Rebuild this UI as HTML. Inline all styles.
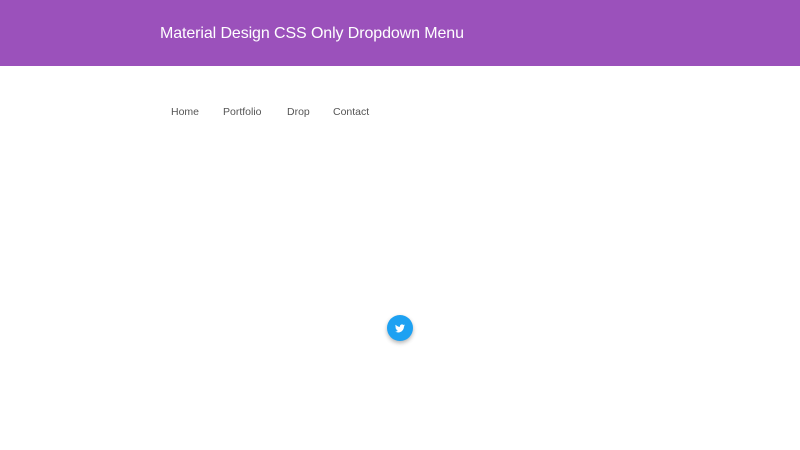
<!DOCTYPE html><html><head><style>
body{margin:0;width:800px;height:450px;background:#fff;font-family:"Liberation Sans",sans-serif;position:relative;overflow:hidden}
.hd{height:66px;background:#9b51bb;position:relative}
.hd h1{position:absolute;left:160px;top:25px;margin:0;font-size:16px;font-weight:normal;color:#fff;letter-spacing:-0.1px}
.nav a{position:absolute;top:106px;font-size:10.5px;color:#555;text-decoration:none}
.fab{position:absolute;left:387px;top:315px;width:26px;height:26px;border-radius:50%;background:#1da1f2;box-shadow:0 2px 4px rgba(0,0,0,.3);display:flex;align-items:center;justify-content:center}
</style></head><body>
<div class="hd"><h1>Material Design CSS Only Dropdown Menu</h1></div>
<div class="nav"><a style="left:171px">Home</a><a style="left:223px">Portfolio</a><a style="left:287px">Drop</a><a style="left:333px">Contact</a></div>
<div class="fab"><svg width="10" height="9" viewBox="0 0 24 20"><path fill="#fff" d="M24 2.4a10 10 0 0 1-2.8.8A5 5 0 0 0 23.3.5a10 10 0 0 1-3.1 1.2A4.9 4.9 0 0 0 11.8 6 14 14 0 0 1 1.7.9a4.9 4.9 0 0 0 1.5 6.6A4.9 4.9 0 0 1 1 6.9a4.9 4.9 0 0 0 3.9 4.9 5 5 0 0 1-2.2.1 4.9 4.9 0 0 0 4.6 3.4A9.9 9.9 0 0 1 0 17.3 14 14 0 0 0 7.5 19.5c9.1 0 14-7.5 14-14v-.6A10 10 0 0 0 24 2.4z"/></svg></div>
</body></html>
